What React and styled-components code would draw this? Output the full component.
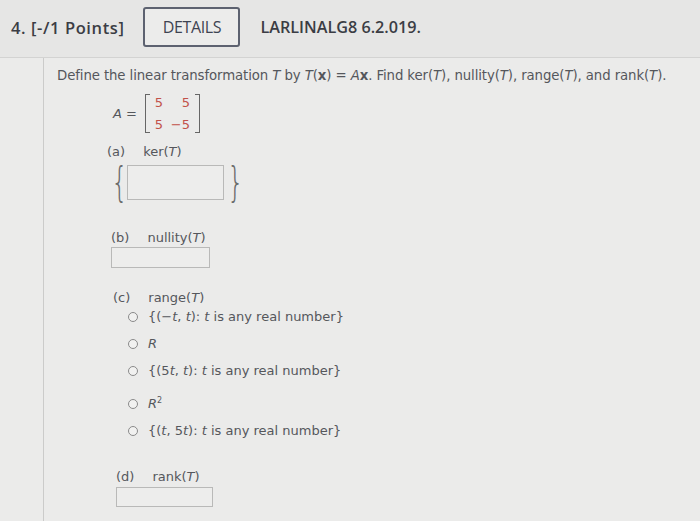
import React from "react";
import styled, { createGlobalStyle } from "styled-components";

const Global = createGlobalStyle`
  html, body { margin: 0; padding: 0; background: #ebebea; }
  body { font-family: "DejaVu Sans", Verdana, sans-serif; color: #4d4f55; }
`;

const Page = styled.div`
  width: 700px;
  height: 521px;
  overflow: hidden;
  background: #ebebea;
  display: flex;
  flex-direction: column;
`;

const Header = styled.div`
  height: 57px;
  flex: none;
  display: flex;
  align-items: center;
  padding-left: 11px;
  background: #e6e6e5;
  border-bottom: 1px solid #d3d3d2;
`;

const HeadText = styled.span`
  font-family: "Open Sans", "Liberation Sans", sans-serif;
  font-size: ${(p) => p.$fs || 16.5}px;
  font-weight: 600;
  color: #3b3d44;
  margin-top: -3px;
  letter-spacing: ${(p) => p.$ls || 0}px;
  margin-left: ${(p) => p.$ml || 0}px;
`;

const DetailsButton = styled.button`
  margin-left: 19px;
  width: 97px;
  height: 40px;
  margin-top: -4px;
  border: 2px solid #5d6270;
  border-radius: 3px;
  background: #ececeb;
  font-family: "Open Sans", sans-serif;
  font-size: 16px;
  color: #3e4352;
  letter-spacing: -0.4px;
  padding: 0;
`;

const Body = styled.div`
  flex: 1;
  margin-left: 43px;
  border-left: 1px solid #cbcbca;
  padding: 8px 0 0 13px;
  display: flex;
  flex-direction: column;
  align-items: flex-start;
  font-size: 13px;
  color: #55575c;
`;

const Sentence = styled.div`
  line-height: 20px;
  font-size: 13.3px;
  letter-spacing: -0.1px;
  white-space: nowrap;
`;

const MatrixRow = styled.div`
  margin: 7px 0 0 56px;
  display: flex;
  align-items: center;
  height: 40px;
`;

const Eq = styled.span`
  font-size: 13px;
  margin-right: 8px;
`;

const Bracket = styled.span`
  width: 4px;
  height: 37px;
  border: 1.5px solid #666;
  ${(p) => (p.$right ? "border-left: none;" : "border-right: none;")}
`;

const Cells = styled.div`
  display: grid;
  grid-template-columns: 9px 27px;
  grid-template-rows: 22px 22px;
  justify-items: end;
  align-items: center;
  padding: 0 5px 0 4px;
  color: #c25149;
  font-size: 13px;
`;

const PartLabel = styled.div`
  margin: ${(p) => p.$mt || 0}px 0 0 ${(p) => p.$ml || 0}px;
  line-height: 18px;
  font-size: 13px;
  display: flex;
  gap: 18px;
`;

const SetRow = styled.div`
  margin: 2px 0 0 55px;
  display: flex;
  align-items: center;
  height: 38px;
`;

const Brace = styled.span`
  display: inline-flex;
  justify-content: center;
  width: 15px;
  font-family: "DejaVu Sans", sans-serif;
  font-weight: 200;
  font-size: 40px;
  line-height: 38px;
  color: #6a6a6a;
  transform: scaleX(0.65);
  margin: ${(p) => (p.$right ? "0 0 0 4px" : "0")};
`;

const AnswerBox = styled.div`
  width: ${(p) => p.$w}px;
  height: ${(p) => p.$h}px;
  border: 1.5px solid #b9b9b8;
  background: #ededec;
  margin: ${(p) => p.$mt || 0}px 0 0 ${(p) => p.$ml || 0}px;
  box-sizing: border-box;
`;

const Options = styled.div`
  margin: -4px 0 0 71px;
  display: flex;
  flex-direction: column;
`;

const Option = styled.label`
  display: flex;
  align-items: center;
  height: ${(p) => (p.$tall ? 33 : 27)}px;
  padding-top: ${(p) => (p.$tall ? 6 : 0)}px;
  box-sizing: border-box;
  gap: 10px;
  font-size: 13px;
`;

const Radio = styled.span`
  width: 8px;
  height: 8px;
  border-radius: 50%;
  border: 1.5px solid #8a8a8a;
  background: #f1f1f0;
`;

const Sup = styled.sup`
  font-size: 8px;
  line-height: 0;
`;

const T = () => <i>T</i>;

export default function App() {
  return (
    <Page>
      <Global />
      <Header>
        <HeadText $ls={0.6}>4. [-/1 Points]</HeadText>
        <DetailsButton>DETAILS</DetailsButton>
        <HeadText $ml={20} $fs={16.2}>
          LARLINALG8 6.2.019.
        </HeadText>
      </Header>
      <Body>
        <Sentence>
          Define the linear transformation <T /> by <T />(<b>x</b>) = <i>A</i>
          <b>x</b>. Find ker(<T />), nullity(<T />), range(<T />), and rank(<T />).
        </Sentence>
        <MatrixRow>
          <Eq>
            <i>A</i> =
          </Eq>
          <Bracket />
          <Cells>
            <span>5</span>
            <span>5</span>
            <span>5</span>
            <span>−5</span>
          </Cells>
          <Bracket $right />
        </MatrixRow>
        <PartLabel $mt={10} $ml={50}>
          <span>(a)</span>
          <span>
            ker(<T />)
          </span>
        </PartLabel>
        <SetRow>
          <Brace>{"{"}</Brace>
          <AnswerBox $w={97} $h={35} />
          <Brace $right>{"}"}</Brace>
        </SetRow>
        <PartLabel $mt={28} $ml={54}>
          <span>(b)</span>
          <span>
            nullity(<T />)
          </span>
        </PartLabel>
        <AnswerBox $w={99} $h={21} $mt={0} $ml={54} />
        <PartLabel $mt={21} $ml={56}>
          <span>(c)</span>
          <span>
            range(<T />)
          </span>
        </PartLabel>
        <Options>
          <Option>
            <Radio />
            <span>
              {"{(−"}
              <i>t</i>, <i>t</i>): <i>t</i> is any real number{"}"}
            </span>
          </Option>
          <Option>
            <Radio />
            <i>R</i>
          </Option>
          <Option>
            <Radio />
            <span>
              {"{(5"}
              <i>t</i>, <i>t</i>): <i>t</i> is any real number{"}"}
            </span>
          </Option>
          <Option $tall>
            <Radio />
            <span>
              <i>R</i>
              <Sup>2</Sup>
            </span>
          </Option>
          <Option>
            <Radio />
            <span>
              {"{("}
              <i>t</i>, 5<i>t</i>): <i>t</i> is any real number{"}"}
            </span>
          </Option>
        </Options>
        <PartLabel $mt={24} $ml={59}>
          <span>(d)</span>
          <span>
            rank(<T />)
          </span>
        </PartLabel>
        <AnswerBox $w={97} $h={20} $mt={1} $ml={59} />
      </Body>
    </Page>
  );
}
